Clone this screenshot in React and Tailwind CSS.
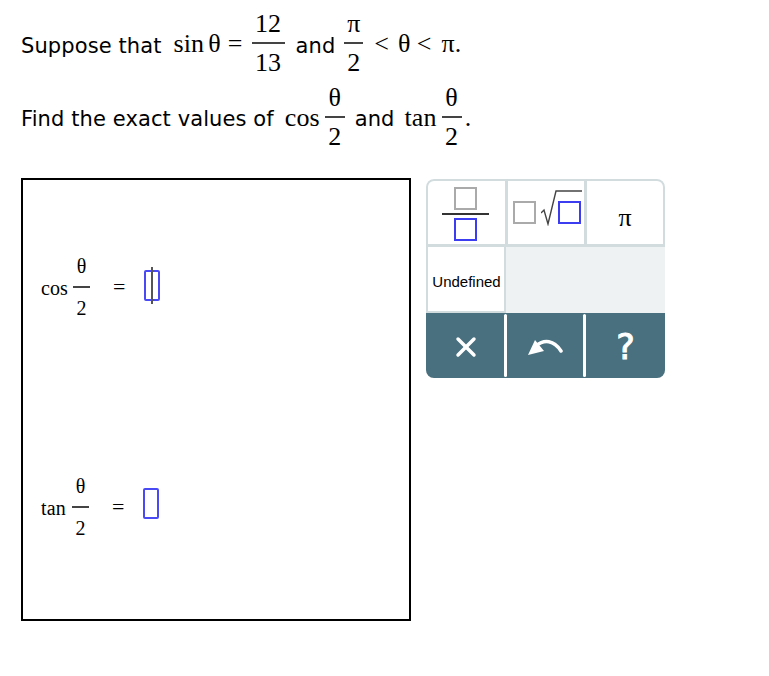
import { X } from 'lucide-react';

const serif = "font-['Liberation_Serif',serif]";

function Frac({ top, bottom, width, small }) {
  const numCls = small ? 'h-[30px] pb-[10px] text-[20px]' : 'h-[31px] pb-[5px] text-[26px]';
  const denCls = small ? 'h-[30px] pt-[10px] text-[20px]' : 'h-[32px] pt-[6px] text-[26px]';
  return (
    <span className={`${serif} ${width} inline-flex flex-col items-center leading-none text-black`}>
      <span className={`${numCls} flex items-end`}>{top}</span>
      <span className="h-[2px] w-full bg-[#444]" />
      <span className={`${denCls} flex items-start`}>{bottom}</span>
    </span>
  );
}

function Box({ blue }) {
  return <span className={`block shrink-0 w-[23px] h-[23px] border-2 ${blue ? 'border-[#3c3cf0]' : 'border-[#aaa]'}`} />;
}

function Math({ children, className }) {
  return <span className={`${serif} text-[26px] ${className}`}>{children}</span>;
}

function Word({ children, className }) {
  return <span className={`whitespace-pre ${className}`}>{children}</span>;
}

function AnswerRow({ fn, fnWidth, cursor, boxOffset, className }) {
  return (
    <div className={`flex items-center ${serif} text-black ${className}`}>
      <span className={`text-[20px] pt-[1px] ${fnWidth}`}>{fn}</span>
      <Frac top="θ" bottom="2" width="w-[17px]" small />
      <span className="text-[22px] w-[13px] ml-[23px] mb-[1px] leading-none">=</span>
      <span className={`relative ml-[18px] ${boxOffset} block w-[16px] h-[31px] border-2 border-[#4a4af5] rounded-[2px]`}>
        {cursor && <span className="absolute left-[5px] top-[-5px] block w-[2px] h-[37px] bg-[#555]" />}
      </span>
    </div>
  );
}

export default function App() {
  return (
    <div className="w-[769px] h-[676px] bg-white pl-[21px] pt-[11px] font-['DejaVu_Sans',sans-serif] text-[21px] tracking-[0.1px] text-black">
      <div className="flex items-center h-[65px]">
        <Word className="pt-[6px]">Suppose that</Word>
        <Math className="ml-[12px]">sin</Math>
        <Math className="ml-[4px]">θ</Math>
        <Math className="ml-[7px]">=</Math>
        <span className="ml-[9px] flex"><Frac top="12" bottom="13" width="w-[33px]" /></span>
        <Word className="ml-[11px] pt-[6px]">and</Word>
        <span className="ml-[9px] flex"><Frac top="π" bottom="2" width="w-[19px]" /></span>
        <Math className="ml-[11px]">&lt;</Math>
        <Math className="ml-[9px]">θ</Math>
        <Math className="ml-[6px]">&lt;</Math>
        <Math className="ml-[10px]">π.</Math>
      </div>
      <div className="flex items-center h-[65px] mt-[9px]">
        <Word className="pt-[4px]">Find the exact values of</Word>
        <Math className="ml-[11px]">cos</Math>
        <span className="ml-[5px] flex"><Frac top="θ" bottom="2" width="w-[20px]" /></span>
        <Word className="ml-[10px] pt-[4px]">and</Word>
        <Math className="ml-[10px]">tan</Math>
        <span className="ml-[5px] flex"><Frac top="θ" bottom="2" width="w-[20px]" /></span>
        <Math className="ml-[3px]">.</Math>
      </div>
      <div className="flex items-start mt-[28px]">
        <div className="w-[390px] h-[443px] border-2 border-black pl-[18px] pt-[76px]">
          <AnswerRow fn="cos" fnWidth="w-[32px]" boxOffset="mb-[4px]" cursor />
          <AnswerRow fn="tan" fnWidth="w-[31px]" boxOffset="mb-[7px]" className="mt-[158px]" />
        </div>
        <div className="ml-[15px] mt-[1px] w-[239px] h-[199px] rounded-[8px] overflow-hidden bg-[#eff2f3] flex flex-col">
          <div className="flex h-[68px] shrink-0 bg-white border-2 border-b-[3px] border-[#d2dcdf] rounded-t-[8px]">
            <div className="w-[77px] flex flex-col items-center pt-[6px] pr-[2px]">
              <Box />
              <span className="block w-[47px] h-[2px] my-[3px] bg-[#333]" />
              <Box blue />
            </div>
            <div className="w-[82px] border-x-[3px] border-[#d2dcdf] flex items-start pl-[5px] pt-[20px]">
              <Box />
              <svg width="41" height="36" viewBox="0 0 41 36" className="ml-[5px] -mt-[11px] -mr-[24px] shrink-0">
                <path d="M0 23 L3 20 L7 34 L15 1 L41 1" fill="none" stroke="#444" strokeWidth="1.4" />
              </svg>
              <Box blue />
            </div>
            <div className="flex-1 flex items-center justify-center pt-[10px]">
              <span className={`${serif} text-[26px] leading-none`}>π</span>
            </div>
          </div>
          <div className="flex h-[66px] shrink-0">
            <div className="w-[80px] bg-white border-l-2 border-r-2 border-b-2 border-[#d2dcdf] flex items-center justify-center pt-[7px] pl-[1px] font-['Liberation_Sans',sans-serif] text-[15px] tracking-normal">Undefined</div>
          </div>
          <div className="flex flex-1 bg-[#49707e] text-white">
            <div className="w-[78px] flex items-center justify-center pt-[3px] pl-[2px]">
              <X size={32} strokeWidth={2.6} />
            </div>
            <span className="block w-[3px] my-[1px] rounded-full bg-white" />
            <div className="w-[76px] flex items-center justify-center pt-[3px]">
              <svg width="36" height="18" viewBox="0 0 36 18">
                <path d="M1 17 L8 2 L17 13 Z" fill="white" />
                <path d="M9 8 C17 1 27 2 34 13" fill="none" stroke="white" strokeWidth="3.5" strokeLinecap="round" />
              </svg>
            </div>
            <span className="block w-[3px] my-[1px] rounded-full bg-white" />
            <div className="flex-1 flex items-center justify-center pt-[3px] font-['DejaVu_Sans',sans-serif] text-[35px] leading-none [-webkit-text-stroke:1px_white]">?</div>
          </div>
        </div>
      </div>
    </div>
  );
}
